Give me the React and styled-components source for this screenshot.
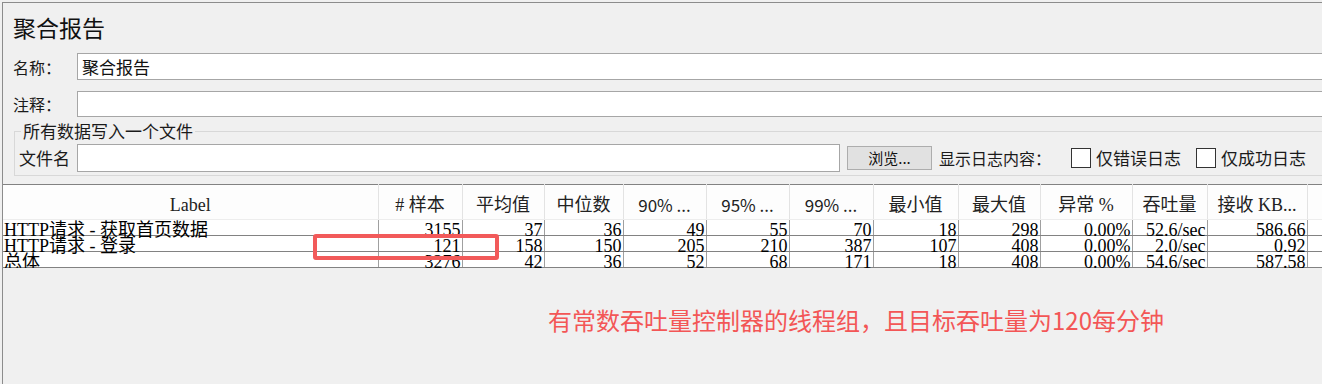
import React from 'react';
import styled, { createGlobalStyle } from 'styled-components';

const columns = [
  { title: 'Label', width: 375, align: 'left' },
  { title: '# 样本', width: 84 },
  { title: '平均值', width: 82 },
  { title: '中位数', width: 79 },
  { title: '90% ...', width: 83, sans: true },
  { title: '95% ...', width: 83, sans: true },
  { title: '99% ...', width: 84, sans: true },
  { title: '最小值', width: 85 },
  { title: '最大值', width: 82 },
  { title: '异常 %', width: 92 },
  { title: '吞吐量', width: 75 },
  { title: '接收 KB...', width: 100 },
  { title: '发...', width: 100 },
];

const rows = [
  ['HTTP请求 - 获取首页数据', '3155', '37', '36', '49', '55', '70', '18', '298', '0.00%', '52.6/sec', '586.66', ''],
  ['HTTP请求 - 登录', '121', '158', '150', '205', '210', '387', '107', '408', '0.00%', '2.0/sec', '0.92', ''],
  ['总体', '3276', '42', '36', '52', '68', '171', '18', '408', '0.00%', '54.6/sec', '587.58', ''],
];

function App() {
  return (
    <>
      <GlobalStyle />
      <Frame>
        <Title>聚合报告</Title>

        <FieldRow>
          <FieldLabel>名称：</FieldLabel>
          <TextInput $height={27} defaultValue="聚合报告" />
        </FieldRow>

        <FieldRow>
          <FieldLabel>注释：</FieldLabel>
          <TextInput $height={26} defaultValue="" />
        </FieldRow>

        <Group>
          <Legend>所有数据写入一个文件</Legend>
          <FileRow>
            <FileLabel>文件名</FileLabel>
            <FileInput defaultValue="" />
            <BrowseButton type="button">浏览...</BrowseButton>
            <LogLabel>显示日志内容：</LogLabel>
            <CheckItem>
              <CheckBox />
              仅错误日志
            </CheckItem>
            <CheckItem>
              <CheckBox />
              仅成功日志
            </CheckItem>
          </FileRow>
        </Group>

        <Results>
          <Table>
            <colgroup>
              {columns.map((col) => (
                <col key={col.title} style={{ width: col.width }} />
              ))}
            </colgroup>
            <thead>
              <tr>
                {columns.map((col) => (
                  <HeadCell key={col.title} $sans={col.sans}>
                    {col.title}
                  </HeadCell>
                ))}
              </tr>
            </thead>
            <tbody>
              {rows.map((row) => (
                <tr key={row[0]}>
                  {row.map((value, i) => (
                    <DataCell key={i} $align={columns[i].align || 'right'}>
                      <CellText>{value}</CellText>
                    </DataCell>
                  ))}
                </tr>
              ))}
            </tbody>
          </Table>
          <Highlight />
          <EmptyArea>
            <Note>有常数吞吐量控制器的线程组，且目标吞吐量为120每分钟</Note>
          </EmptyArea>
        </Results>
      </Frame>
    </>
  );
}

export default App;

// ====== Styled Components ======
const GlobalStyle = createGlobalStyle`
  html, body {
    margin: 0;
    background: #f0f0f0;
    overflow: hidden;
  }
  body {
    width: 1322px;
    height: 384px;
    font-family: "Noto Sans CJK SC", sans-serif;
    color: #1a1a1a;
  }
`;

const Frame = styled.div`
  position: relative;
  margin: 2px 0 0 2px;
  width: 1360px;
  height: 382px;
  border-top: 1px solid #8c8c8c;
  border-left: 1px solid #8c8c8c;
  box-sizing: border-box;
  display: flex;
  flex-direction: column;
  overflow: hidden;
`;

const Title = styled.div`
  padding: 9px 0 0 10px;
  font-size: 23px;
  line-height: 30px;
  color: #111;
`;

const FieldRow = styled.div`
  display: flex;
  align-items: center;
  margin-top: 11px;
  padding-left: 10px;
`;

const FieldLabel = styled.span`
  width: 64px;
  flex-shrink: 0;
  font-size: 16px;
  line-height: 20px;
`;

const TextInput = styled.input`
  flex: 1;
  height: ${(p) => p.$height}px;
  box-sizing: border-box;
  border: 1px solid #a6a6a6;
  background: #fff;
  padding: 0 4px;
  font-family: "Noto Sans CJK SC", sans-serif;
  font-size: 17px;
  color: #111;
  outline: none;
`;

const Group = styled.fieldset`
  margin: 4px 0 0 11px;
  padding: 3px 6px 3px 4px;
  border: 1px solid #d8d8d8;
  border-right: none;
`;

const Legend = styled.legend`
  padding: 0 2px;
  margin-left: 2px;
  font-size: 17px;
  line-height: 20px;
`;

const FileRow = styled.div`
  display: flex;
  align-items: center;
`;

const FileLabel = styled.span`
  width: 58px;
  flex-shrink: 0;
  font-size: 17px;
  line-height: 20px;
`;

const FileInput = styled.input`
  width: 763px;
  height: 28px;
  box-sizing: border-box;
  border: 1px solid #a6a6a6;
  background: #fff;
  outline: none;
`;

const BrowseButton = styled.button`
  margin-left: 7px;
  width: 85px;
  height: 24px;
  box-sizing: border-box;
  border: 1px solid #adadad;
  background: #e1e1e1;
  font-family: "Noto Sans CJK SC", sans-serif;
  font-size: 15px;
  line-height: 20px;
  padding: 0;
  color: #111;
`;

const LogLabel = styled.span`
  margin-left: 7px;
  font-size: 16px;
  line-height: 20px;
`;

const CheckItem = styled.label`
  display: flex;
  align-items: center;
  gap: 5px;
  margin-left: 20px;
  font-size: 17px;
  line-height: 20px;

  & + & {
    margin-left: 15px;
  }
`;

const CheckBox = styled.span`
  width: 20px;
  height: 20px;
  box-sizing: border-box;
  border: 1px solid #333;
  background: #fff;
`;

const Results = styled.div`
  margin-top: 8px;
  flex: 1;
  display: flex;
  flex-direction: column;
`;

const Table = styled.table`
  table-layout: fixed;
  border-collapse: collapse;
  width: 1404px;
  border-top: 1px solid #828282;
  border-bottom: 1px solid #6e6e6e;
  font-family: "Liberation Serif", "Noto Sans CJK SC", serif;
  font-size: 18px;
  background: #fff;
`;

const HeadCell = styled.th`
  height: 28px;
  padding: 6px 0 0;
  font-weight: normal;
  text-align: center;
  white-space: nowrap;
  overflow: hidden;
  background: #fdfdfd;
  color: #222;
  border-right: 1px solid #e3e3e3;
  border-bottom: 1px solid #ededed;
  line-height: 22px;
  font-family: ${(p) =>
    p.$sans ? '"Noto Sans CJK SC", sans-serif' : '"Liberation Serif", "Noto Sans CJK SC", serif'};
  font-size: ${(p) => (p.$sans ? '17px' : '18px')};
`;

const DataCell = styled.td`
  height: 15px;
  padding: 0 1px;
  text-align: ${(p) => p.$align};
  border-right: 1px solid #a0a0a0;
  border-bottom: 1px solid #828282;
  color: #000;
`;

const CellText = styled.div`
  height: 15px;
  line-height: 20px;
  white-space: nowrap;
  overflow: visible;
`;

const Highlight = styled.div`
  position: absolute;
  left: 310px;
  top: 231px;
  width: 186px;
  height: 26px;
  box-sizing: border-box;
  border: 4px solid #f25a5a;
  border-radius: 3px;
`;

const EmptyArea = styled.div`
  flex: 1;
  padding: 36px 0 0 545px;
  background: #f0f0f0;
`;

const Note = styled.div`
  font-family: "Noto Sans CJK SC", sans-serif;
  font-size: 24px;
  line-height: 32px;
  color: #f35656;
  white-space: nowrap;
`;
